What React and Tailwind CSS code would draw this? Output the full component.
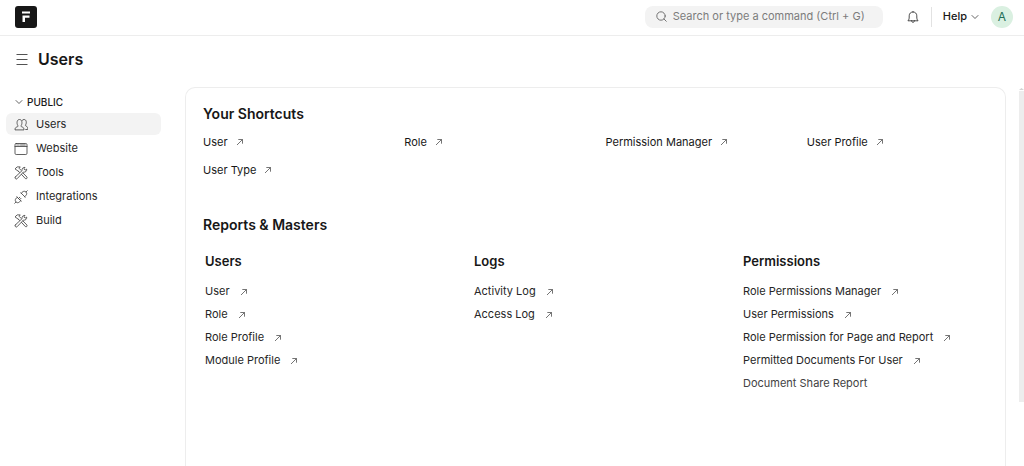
import React from "react";

const sidebarItems = [
  { label: "Users", icon: "users", active: true },
  { label: "Website", icon: "website" },
  { label: "Tools", icon: "tools" },
  { label: "Integrations", icon: "integrations" },
  { label: "Build", icon: "tools" },
];

const shortcuts = ["User", "Role", "Permission Manager", "User Profile", "User Type"];

const cards = [
  {
    title: "Users",
    links: [{ label: "User" }, { label: "Role" }, { label: "Role Profile" }, { label: "Module Profile" }],
  },
  {
    title: "Logs",
    links: [{ label: "Activity Log" }, { label: "Access Log" }],
  },
  {
    title: "Permissions",
    links: [
      { label: "Role Permissions Manager" },
      { label: "User Permissions" },
      { label: "Role Permission for Page and Report" },
      { label: "Permitted Documents For User" },
      { label: "Document Share Report", muted: true },
    ],
  },
];

const iconPaths = {
  users: (
    <>
      <path d="M1 11.500c0-1.700.8-2.200 2.100-2.600.9-.3 1.100-.8.6-1.600C2.600 5.400 2.700 1.500 5.500 1.500s2.900 3.900 1.800 5.800c-.5.8-.3 1.300.6 1.600 1.300.4 2.100.9 2.100 2.600z" />
      <path d="M8.300 2.300c.4-.5 1-.8 1.700-.8 2.600 0 2.700 3.400 1.700 5.200-.4.8-.2 1.300.6 1.500 1 .4 1.400 1 1.400 2.300v1h-2" />
    </>
  ),
  website: (
    <>
      <rect x="1" y="1.500" width="12" height="11" rx="1.200" />
      <path d="M1 4.500h12M2.800 3h.6M4.600 3h.6M6.500 3h4.800" />
    </>
  ),
  tools: (
    <>
      <path d="M4.300 5.200 1 2.900 3.200.9h3L5.200 2.300l1.700 1.900M4.300 5.200l1.300 1.200M7.500 8.400l3.900 4.200c1 .7 2.200-.6 1.500-1.600L9 7" />
      <path d="M1.300 11 8.100 4.600C7.600 2.800 9 1.100 11 1.400L9.800 2.900l1.300 1.300 1.600-1.100c.3 2-1.400 3.500-3.200 2.900L3 12.800c-1.100.9-2.600-.7-1.700-1.800z" />
    </>
  ),
  integrations: (
    <>
      <path d="M.7 13.300 1.900 12.100M2.800 6.800l4.400 4.400M3.300 7.300c-1.900.9-2.700 3-1.400 4.600s3.500.8 4.800-1.200M4.600 8.400l1.200-1.200M5.800 9.500 7 8.300" />
      <path d="M13.300.7 12.100 1.900M6.800 2.800l4.400 4.400M7.300 3.300C8.200 1.400 10.300.6 11.900 1.900s.8 3.500-1.200 4.800" />
    </>
  ),
};

const SidebarIcon = ({ name }) => (
  <svg className="size-3.5 shrink-0" viewBox="0 0 14 14" fill="none" stroke="#444" strokeWidth="0.85" strokeLinecap="round" strokeLinejoin="round">
    {iconPaths[name]}
  </svg>
);

const ArrowIcon = () => (
  <svg className="size-2 shrink-0 text-[#525252]" viewBox="0 0 8 8" fill="none" stroke="currentColor" strokeWidth="0.8">
    <path d="M1 7 6.500 1.500M2.300 1.500h4.200v4.200" />
  </svg>
);

const ChevronIcon = () => (
  <svg className="size-2 shrink-0 text-[#525252]" viewBox="0 0 8 8" fill="none" stroke="currentColor" strokeWidth="0.9" strokeLinecap="round" strokeLinejoin="round">
    <path d="m1 2.500 3 3 3-3" />
  </svg>
);

const Navbar = () => {
  return (
    <header className="flex h-9 shrink-0 items-center border-b border-[#ededed] pr-[11px] pb-0.5 pl-[15px]">
      <a href="#" aria-label="Home" className="block">
        <svg className="size-[22px]" viewBox="0 0 22 22">
          <rect width="22" height="22" rx="3" fill="#171717" />
          <path fill="#fff" d="M7 5.500h8v2H7zM7.500 9.500h7v2.200H10V16H7.500z" />
        </svg>
      </a>
      <div className="ml-auto flex items-center">
        <label className="flex h-[22px] w-[238px] items-center gap-1.5 rounded-lg bg-[#f3f3f3] pr-2 pl-[11px]">
          <svg className="size-[11px] shrink-0 text-[#666]" viewBox="0 0 11 11" fill="none" stroke="currentColor" strokeWidth="0.9" strokeLinecap="round">
            <circle cx="5" cy="5" r="4.200" />
            <path d="m8 8 2.300 2.300" />
          </svg>
          <input
            type="text"
            aria-label="Search"
            placeholder="Search or type a command (Ctrl + G)"
            className="w-full min-w-0 bg-transparent text-[11px] text-[#171717] outline-none placeholder:text-[#7c7c7c]"
          />
        </label>
        <button type="button" aria-label="Notifications" className="ml-6">
          <svg className="size-3 text-[#383838]" viewBox="0 0 12 12" fill="none" stroke="currentColor" strokeWidth="0.9" strokeLinecap="round" strokeLinejoin="round">
            <path d="M1.200 9.500c.8-1 1-1.700 1-3.500V4.800C2.200 2.500 3.800 1 6 1s3.800 1.500 3.800 3.800V6c0 1.800.2 2.500 1 3.500zM4.500 9.700c0 2.300 3 2.300 3 0M6 .4V1" />
          </svg>
        </button>
        <div className="ml-3 h-5 w-px bg-[#e2e2e2]" />
        <button type="button" className="ml-[11px] flex items-center gap-1 text-[11px] font-medium text-[#171717]">
          Help
          <ChevronIcon />
        </button>
        <button type="button" className="ml-3 size-[22px] rounded-full bg-[#daf0e1] text-xs text-[#216e56]">
          A
        </button>
      </div>
    </header>
  );
};

const Sidebar = () => {
  return (
    <nav className="w-[155px] shrink-0 pt-1.5">
      <button type="button" className="flex h-[18px] items-center gap-1 pl-[9px] text-[10px] font-medium text-[#171717]">
        <ChevronIcon />
        PUBLIC
      </button>
      <ul className="mt-0.5 flex flex-col gap-0.5">
        {sidebarItems.map((item) => (
          <li key={item.label}>
            <a
              href="#"
              className={`flex h-[22px] items-center gap-2 rounded-md pt-px pl-2 text-[11px] text-[#262626] ${item.active ? "bg-[#f3f3f3]" : ""}`}
            >
              <SidebarIcon name={item.icon} />
              {item.label}
            </a>
          </li>
        ))}
      </ul>
    </nav>
  );
};

const LinkCard = ({ title, links }) => {
  return (
    <section>
      <h3 className="text-[13px] leading-5 font-semibold text-[#171717]">{title}</h3>
      <ul className="mt-[9px]">
        {links.map((link) => (
          <li key={link.label}>
            <a
              href="#"
              className={`flex h-[23px] items-center gap-2.5 text-[11px] whitespace-nowrap ${link.muted ? "text-[#424242]" : "text-[#262626]"}`}
            >
              {link.label}
              {!link.muted && <ArrowIcon />}
            </a>
          </li>
        ))}
      </ul>
    </section>
  );
};

const App = () => {
  return (
    <div className="flex h-screen flex-col overflow-hidden bg-white font-['Inter',sans-serif]">
      <Navbar />
      <div className="flex shrink-0 items-center gap-2.5 pt-[11px] pb-[13px] pl-4">
        <button type="button" aria-label="Toggle sidebar">
          <svg className="size-3 text-[#525252]" viewBox="0 0 12 12" stroke="currentColor" strokeWidth="1">
            <path d="M.5 1.500h11M.5 6.500h11M.5 11.500h11" />
          </svg>
        </button>
        <h1 className="text-base leading-6 font-semibold text-[#171717]">Users</h1>
      </div>
      <div className="flex min-h-0 flex-1 pt-[3px] pl-1.5">
        <Sidebar />
        <main className="ml-6 min-w-0 flex-1 overflow-hidden rounded-t-[10px] border border-b-0 border-[#ededed] px-[17px] pt-4">
          <h2 className="text-sm font-semibold text-[#171717]">Your Shortcuts</h2>
          <ul className="mt-2 grid grid-cols-4 gap-x-5 gap-y-2">
            {shortcuts.map((label) => (
              <li key={label}>
                <a href="#" className="flex h-5 items-center gap-2 text-[11px] whitespace-nowrap text-[#171717]">
                  {label}
                  <ArrowIcon />
                </a>
              </li>
            ))}
          </ul>
          <h2 className="mt-[35px] text-sm font-semibold text-[#171717]">Reports &amp; Masters</h2>
          <div className="mt-4 grid grid-cols-3 gap-x-[26px] px-0.5">
            {cards.map((card) => (
              <LinkCard key={card.title} {...card} />
            ))}
          </div>
        </main>
        <div className="ml-[13px] flex w-[5px] flex-col items-center">
          <svg className="h-1 w-[5px]" viewBox="0 0 5 4">
            <path d="M2.500 1 5 3H0z" fill="#d4d4d4" />
          </svg>
          <div className="h-[82%] w-full bg-[#ededed]" />
        </div>
      </div>
    </div>
  );
};

export default App;
